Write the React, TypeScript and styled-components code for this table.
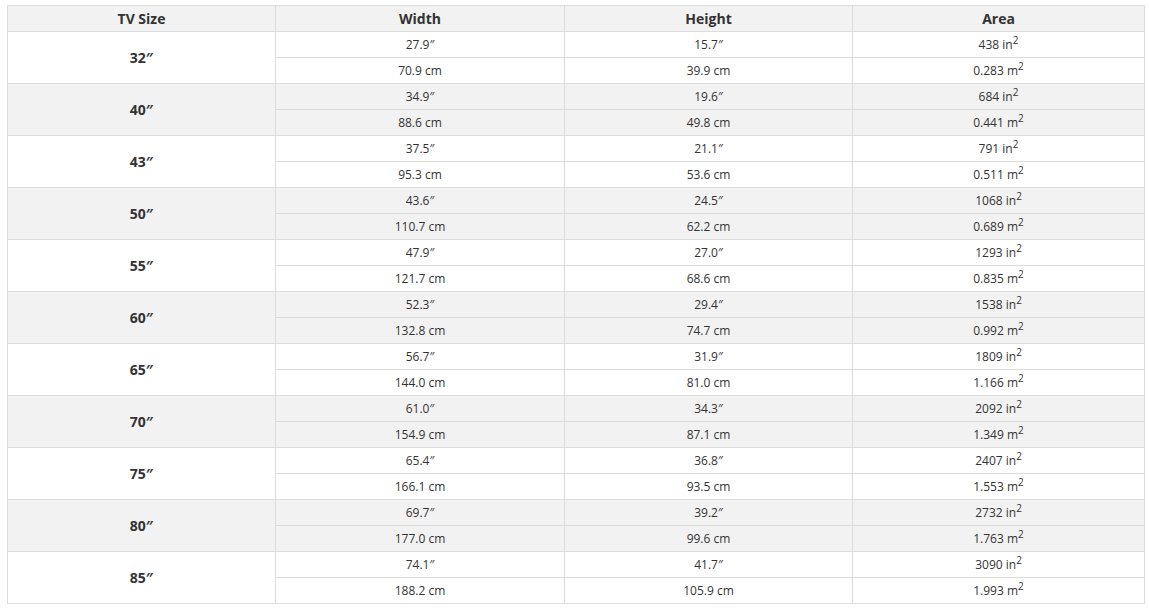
import React from "react";
import styled, { createGlobalStyle } from "styled-components";

const Global = createGlobalStyle`
  html, body { margin: 0; padding: 0; background: #fff; }
  body { font-family: "Open Sans", "Noto Sans", sans-serif; color: #333; }
`;

const Page = styled.div`
  padding: 5px 5px 0 7px;
`;

const Table = styled.table`
  width: 1137px;
  border-collapse: collapse;
  table-layout: fixed;
  font-size: 12px;
`;

const Th = styled.th`
  background: #f2f2f2;
  border: 1px solid #dcdcdc;
  height: 25px;
  padding: 0;
  font-weight: 700;
  font-size: 14px;
  text-align: center;
  color: #333;
`;

const Td = styled.td<{ $shade: boolean; $bold?: boolean }>`
  background: ${(p) => (p.$shade ? "#f2f2f2" : "#fff")};
  border: 1px solid #dcdcdc;
  height: 25px;
  padding: 0;
  text-align: center;
  vertical-align: middle;
  font-weight: ${(p) => (p.$bold ? 700 : 400)};
  font-size: ${(p) => (p.$bold ? "14px" : "12px")};
  line-height: 16px;
`;

const Sup = styled.sup`
  font-size: 10px;
  line-height: 0;
  vertical-align: 5px;
`;

const data: [number, string, string, string, string, number, string][] = [
  [32, "27.9", "70.9", "15.7", "39.9", 438, "0.283"],
  [40, "34.9", "88.6", "19.6", "49.8", 684, "0.441"],
  [43, "37.5", "95.3", "21.1", "53.6", 791, "0.511"],
  [50, "43.6", "110.7", "24.5", "62.2", 1068, "0.689"],
  [55, "47.9", "121.7", "27.0", "68.6", 1293, "0.835"],
  [60, "52.3", "132.8", "29.4", "74.7", 1538, "0.992"],
  [65, "56.7", "144.0", "31.9", "81.0", 1809, "1.166"],
  [70, "61.0", "154.9", "34.3", "87.1", 2092, "1.349"],
  [75, "65.4", "166.1", "36.8", "93.5", 2407, "1.553"],
  [80, "69.7", "177.0", "39.2", "99.6", 2732, "1.763"],
  [85, "74.1", "188.2", "41.7", "105.9", 3090, "1.993"],
];

export default function App() {
  return (
    <Page>
      <Global />
      <Table>
        <colgroup>
          <col style={{ width: 268 }} />
          <col style={{ width: 289 }} />
          <col style={{ width: 288 }} />
          <col style={{ width: 292 }} />
        </colgroup>
        <thead>
          <tr>
            <Th>TV Size</Th>
            <Th>Width</Th>
            <Th>Height</Th>
            <Th>Area</Th>
          </tr>
        </thead>
        <tbody>
          {data.map(([size, wi, wc, hi, hc, ai, am], i) => {
            const shade = i % 2 === 1;
            return (
              <React.Fragment key={size}>
                <tr>
                  <Td $shade={shade} $bold rowSpan={2}>
                    {size}″
                  </Td>
                  <Td $shade={shade}>{wi}″</Td>
                  <Td $shade={shade}>{hi}″</Td>
                  <Td $shade={shade}>
                    {ai} in<Sup>2</Sup>
                  </Td>
                </tr>
                <tr>
                  <Td $shade={shade}>{wc} cm</Td>
                  <Td $shade={shade}>{hc} cm</Td>
                  <Td $shade={shade}>
                    {am} m<Sup>2</Sup>
                  </Td>
                </tr>
              </React.Fragment>
            );
          })}
        </tbody>
      </Table>
    </Page>
  );
}
